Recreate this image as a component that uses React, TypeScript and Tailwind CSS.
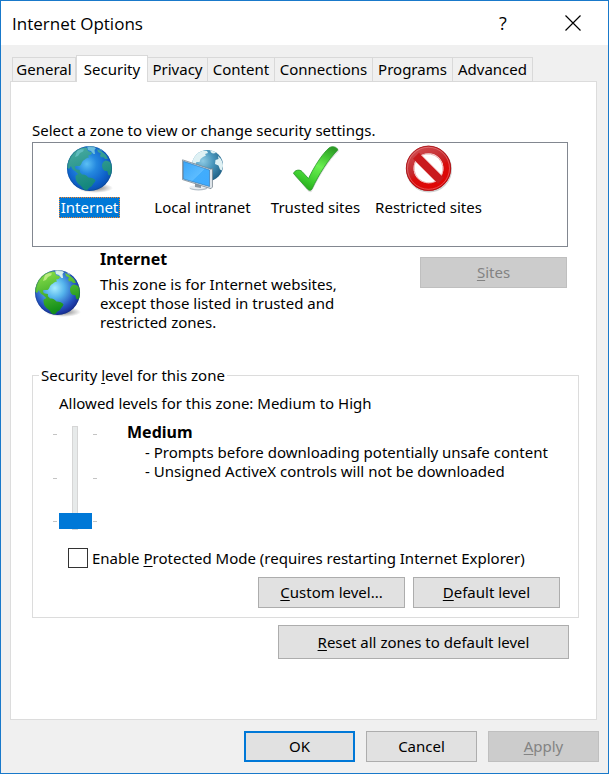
import { useId, useState } from "react";
import type { ReactNode } from "react";

function Globe({ selected = false }: { selected?: boolean }) {
  const id = useId();
  const sea = selected
    ? ["#5cc0f4", "#2488df", "#0f62cb", "#0a4fae"]
    : ["#a6ecff", "#55b4ec", "#2552be", "#17278f"];
  const land = selected ? ["#46a9a0", "#14877c"] : ["#86dd48", "#148f1a"];
  return (
    <svg viewBox="0 0 48 48" className="size-12 shrink-0" aria-hidden="true">
      <defs>
        <radialGradient id={`${id}s`} cx="0.44" cy="0.4" r="0.62">
          <stop offset="0" stopColor={sea[0]} />
          <stop offset="0.35" stopColor={sea[1]} />
          <stop offset="0.75" stopColor={sea[2]} />
          <stop offset="1" stopColor={sea[3]} />
        </radialGradient>
        <linearGradient id={`${id}l`} gradientUnits="userSpaceOnUse" x1="8" y1="4" x2="20" y2="42">
          <stop offset="0" stopColor={land[0]} />
          <stop offset="1" stopColor={land[1]} />
        </linearGradient>
        <radialGradient id={`${id}h`}>
          <stop offset="0" stopColor="#444" stopOpacity="0.75" />
          <stop offset="1" stopColor="#555" stopOpacity="0" />
        </radialGradient>
        <clipPath id={`${id}c`}>
          <circle cx="23.5" cy="23.5" r="22.5" />
        </clipPath>
      </defs>
      <ellipse cx="29" cy="43" rx="18" ry="5" fill={`url(#${id}h)`} />
      <circle cx="23.5" cy="23.5" r="22.5" fill={`url(#${id}s)`} />
      <g clipPath={`url(#${id}c)`} fill={`url(#${id}l)`}>
        <path d="M0 22C1 14 5 8 10 5c4-2 8-3 11-2l1 3 4 1.500c0 2-2 3-4 3l1 2c-2 0-3 1-4 2-2 1-3 2-3.500 4-1 2-1.500 2.500-3 2.500l-3 0c-1 1.500 0 3 1.500 3.500l3 .5c-.5 2 0 3 2 4l-1 1c-3-.5-4-2.500-6-4-2-1-3-2-4-5l-2 3z" />
        <path d="M9.500 31c2-2 4-2.500 6.500-1.500 3-.5 5 1 6.500 3 3 0 6 1 7 3-.5 2-2 2.500-3 4.500-1 2-3 2-4 3.500-1 2-3 2.500-4 1.500-2-1.500-2-3-4-4.500-3-2-5-4-5-9.500z" />
        <path d="M36 20c.5-2 1.500-4 3.500-4.500 2 .5 4 .5 6 3l1 5-1 6c-1 1-2 1-3 .500-1-1.500-.5-3-1.500-4-3 .5-5-2-5-6z" />
        <path d="m31 4 4 2 5 4 2 4-3 0c-1-2-2-2-4-1.500l-1-2 1-2-3-1.500z" />
        <path fill={selected ? "#6fbfdc" : "#d9f2ec"} d="m21 1 6 0 3 2-1.500 2 .5 4-1.500 0-2.500-3-3-1zm11 1.500 3 1 2 2.500-3-1z" />
        <path fill={selected ? "#6cc4cc" : "#d6f39a"} opacity="0.7" d="M11 6c2-2 5-2 7-1.500l-1 2-3 1.500-2 3-3 1z" />
      </g>
      <circle cx="23.5" cy="23.5" r="22" fill="none" stroke="#0a3a72" strokeOpacity="0.3" />
    </svg>
  );
}

function Intranet() {
  return (
    <svg viewBox="0 0 48 48" className="size-12" aria-hidden="true">
      <defs>
        <radialGradient id="net-sea" cx="0.35" cy="0.35" r="0.75">
          <stop offset="0" stopColor="#8fcbe4" />
          <stop offset="0.45" stopColor="#4a97bd" />
          <stop offset="1" stopColor="#1c5b80" />
        </radialGradient>
        <linearGradient id="net-screen" x1="0" y1="0" x2="1" y2="1">
          <stop offset="0" stopColor="#3aa6f8" />
          <stop offset="0.55" stopColor="#5cbcff" />
          <stop offset="0.56" stopColor="#41adfc" />
          <stop offset="1" stopColor="#3eaaff" />
        </linearGradient>
        <clipPath id="net-clip">
          <circle cx="28.500" cy="20.500" r="15.500" />
        </clipPath>
      </defs>
      <circle cx="28.500" cy="20.500" r="15.500" fill="url(#net-sea)" />
      <g clipPath="url(#net-clip)" fill="#dff1f4">
        <path d="M12 17c1-6 6-10 11-11.500l5 .5 1 2-3 1 1 1.500-3 1.500-2.500 2-1 3-3 0-1 2-3-1z" />
        <path d="m31 5 4 .5 2 2.500-3 .5-2-1zM39 11l3 3 2.500 6-1.500 5.500-2-1-1.500-4-3.500-1.500.5-4 3-1z" />
      </g>
      <ellipse cx="19.500" cy="43" rx="9" ry="2.600" fill="#b3bec7" />
      <ellipse cx="19" cy="42.200" rx="8.500" ry="2" fill="#e9eef2" />
      <path d="m16 37 6 2v4l-6-1z" fill="#8b98a3" />
      <path d="m3.500 14.800 28.500 9.400 1.500-.7v18.500l-1.500 1.700L3.500 34.600z" fill="#dfe5ea" stroke="#6f7c87" strokeWidth="0.7" />
      <path d="m4.500 16.300 26 8.700v16.500l-26-7.500z" fill="url(#net-screen)" stroke="#2670ad" strokeWidth="0.6" />
    </svg>
  );
}

function Trusted() {
  return (
    <svg viewBox="0 0 48 48" className="size-12" aria-hidden="true">
      <defs>
        <linearGradient id="ok-fill" x1="0.3" y1="1" x2="0.8" y2="0">
          <stop offset="0" stopColor="#25a818" />
          <stop offset="0.2" stopColor="#3ccb2e" />
          <stop offset="0.55" stopColor="#6bf052" />
          <stop offset="0.8" stopColor="#43c433" />
          <stop offset="1" stopColor="#2f9b27" />
        </linearGradient>
      </defs>
      <path d="M3 31c0-3 5-4 8-1l6 6C22 24 31 10 38 4c3-3 9-1 9 2C37 15 28 30 20 46c-1 2-3 1-4 0z" fill="#777" opacity="0.25" />
      <path
        d="M1.500 28.500c1-3.500 6-4.500 8.500-2l6.500 7C22 22 30 9 37 3c3-2.500 8.500-1 8.700 2C36 15 27 29 20 44c-1 1.800-3 1.600-4.300.3z"
        fill="url(#ok-fill)"
        stroke="#28962a"
        strokeWidth="0.8"
      />
    </svg>
  );
}

function Restricted() {
  return (
    <svg viewBox="0 0 48 48" className="size-12" aria-hidden="true">
      <defs>
        <linearGradient id="no-fill" x1="0.2" y1="0" x2="0.7" y2="1">
          <stop offset="0" stopColor="#d0484c" />
          <stop offset="0.45" stopColor="#c5282c" />
          <stop offset="0.6" stopColor="#d80c0c" />
          <stop offset="1" stopColor="#e00505" />
        </linearGradient>
      </defs>
      <circle cx="24" cy="24.500" r="19.500" fill="none" stroke="#777" strokeOpacity="0.35" strokeWidth="7" />
      <circle cx="23.500" cy="23.300" r="18.700" fill="none" stroke="url(#no-fill)" strokeWidth="7.500" />
      <path d="m11 10.800 25 25" stroke="#c9191d" strokeWidth="8.500" />
      <circle cx="23.500" cy="23.300" r="22.200" fill="none" stroke="#a30d12" strokeWidth="0.8" />
      <circle cx="23.500" cy="23.300" r="21" fill="none" stroke="#ee9a9a" strokeOpacity="0.6" strokeWidth="0.8" />
      <path
        d="M16.500 10.300a15 15 0 0 1 20 20zM30.500 36.500a15 15 0 0 1-20-20z"
        fill="none"
        stroke="#eda3a3"
        strokeWidth="0.9"
      />
    </svg>
  );
}

const tabs = [
  { name: "General", width: "w-16" },
  { name: "Security", width: "w-[72px]" },
  { name: "Privacy", width: "w-[60px]" },
  { name: "Content", width: "w-[67px]" },
  { name: "Connections", width: "w-[98px]" },
  { name: "Programs", width: "w-20" },
  { name: "Advanced", width: "w-20" },
];

const zones = [
  { name: "Internet", icon: <Globe selected /> },
  { name: "Local intranet", icon: <Intranet /> },
  { name: "Trusted sites", icon: <Trusted /> },
  { name: "Restricted sites", icon: <Restricted /> },
];

function Button({
  children,
  className,
  disabled = false,
}: {
  children: ReactNode;
  className: string;
  disabled?: boolean;
}) {
  const look = disabled
    ? "border border-[#bfbfbf] bg-[#cccccc] text-[#838383]"
    : "border border-[#adadad] bg-[#e1e1e1]";
  return (
    <button type="button" disabled={disabled} className={`${look} ${className}`}>
      {children}
    </button>
  );
}

function Key({ children }: { children: string }) {
  return <span className="underline decoration-1 underline-offset-2">{children}</span>;
}

function Ticks() {
  return (
    <div className="flex h-[88px] w-1 flex-col justify-between" aria-hidden="true">
      <span className="h-px bg-[#c4c4c4]" />
      <span className="h-px bg-[#c4c4c4]" />
      <span className="h-px bg-[#c4c4c4]" />
    </div>
  );
}

export default function App() {
  const [tab, setTab] = useState("Security");
  return (
    <div className="flex min-h-screen flex-col border border-[#1979ca] bg-[#f0f0f0] font-['Noto_Sans',sans-serif] text-[15px] leading-[19px] text-black">
      <header className="flex h-11 items-center justify-between bg-white pr-[26px] pl-[11px]">
        <h1 className="font-['Open_Sans',sans-serif] text-[17px]">Internet Options</h1>
        <div className="flex items-center gap-[51px]">
          <button type="button" aria-label="Help" className="w-5 font-['Open_Sans',sans-serif] text-[18px]">
            ?
          </button>
          <button type="button" aria-label="Close" className="p-px">
            <svg viewBox="0 0 16 16" className="size-4" stroke="#000" strokeWidth="1.200">
              <path d="m.5.5 15 15M15.500.5l-15 15" />
            </svg>
          </button>
        </div>
      </header>

      <main className="flex grow flex-col pt-[10px] pr-[11px] pl-[9px]">
        <div role="tablist" className="relative z-10 -mb-px flex h-[27px] items-end pl-[2px]">
          {tabs.map((t) => (
            <button
              key={t.name}
              type="button"
              role="tab"
              aria-selected={t.name === tab}
              onClick={() => setTab(t.name)}
              className={`${t.width} ${
                t.name === tab
                  ? "h-[27px] border-x border-t border-[#d9d9d9] bg-white"
                  : "h-[25px] border-t border-r border-b border-[#d9d9d9] first:border-l"
              }`}
            >
              {t.name}
            </button>
          ))}
        </div>

        <section role="tabpanel" className="grow border border-[#dcdcdc] bg-white pt-[39px] pr-[17px] pl-[21px]">
          <p>Select a zone to view or change security settings.</p>
          <ul className="mt-[2px] mr-[11px] flex h-[105px] border border-[#828790] pt-[2px]">
            {zones.map((z, i) => (
              <li key={z.name} className="w-[113px]">
                <button type="button" className="flex w-full flex-col items-center gap-1">
                  {z.icon}
                  <span
                    className={
                      i === 0
                        ? "border border-dotted border-[#ff8728] bg-[#0078d7] px-px text-white"
                        : "border border-transparent whitespace-nowrap"
                    }
                  >
                    {z.name}
                  </span>
                </button>
              </li>
            ))}
          </ul>

          <div className="mt-[2px] mr-3 flex">
            <div className="mt-[20px] ml-[2px]">
              <Globe />
            </div>
            <div className="ml-[18px] grow">
              <h2 className="text-base leading-5 font-bold">Internet</h2>
              <p className="mt-[6px]">
                This zone is for Internet websites,
                <br />
                except those listed in trusted and
                <br />
                restricted zones.
              </p>
            </div>
            <Button disabled className="mt-2 h-[31px] w-[147px]">
              <Key>S</Key>ites
            </Button>
          </div>

          <fieldset className="mt-[34px] border border-[#dcdcdc] pb-[9px]">
            <legend className="ml-[6px] px-[2px]">
              Security <Key>l</Key>evel for this zone
            </legend>
            <p className="mt-[9px] ml-[26px]">Allowed levels for this zone: Medium to High</p>
            <div className="mt-[13px] ml-5 flex">
              <div className="flex items-start">
                <div className="mt-2">
                  <Ticks />
                </div>
                <input
                  type="range"
                  aria-label="Security level"
                  min={0}
                  max={2}
                  defaultValue={0}
                  className="mr-[2px] ml-px h-[104px] w-[33px] appearance-none bg-transparent [direction:rtl] [writing-mode:vertical-lr] [&::-webkit-slider-runnable-track]:h-full [&::-webkit-slider-runnable-track]:w-[6px] [&::-webkit-slider-runnable-track]:border [&::-webkit-slider-runnable-track]:border-[#d6d6d6] [&::-webkit-slider-runnable-track]:bg-[#e7eaea] [&::-webkit-slider-thumb]:-ml-[14px] [&::-webkit-slider-thumb]:h-4 [&::-webkit-slider-thumb]:w-[33px] [&::-webkit-slider-thumb]:appearance-none [&::-webkit-slider-thumb]:bg-[#0078d7]"
                />
                <div className="mt-2">
                  <Ticks />
                </div>
              </div>
              <div className="-mt-1 ml-[30px]">
                <h2 className="text-base leading-5 font-bold">Medium</h2>
                <ul className="mt-px pl-[18px]">
                  <li>- Prompts before downloading potentially unsafe content</li>
                  <li>- Unsigned ActiveX controls will not be downloaded</li>
                </ul>
              </div>
            </div>
            <label className="mt-[18px] ml-[35px] flex w-fit items-center gap-1">
              <input type="checkbox" className="size-5 appearance-none border border-[#333333] bg-white checked:bg-[#0078d7]" />
              <span>
                Enable <Key>P</Key>rotected Mode (requires restarting Internet Explorer)
              </span>
            </label>
            <div className="mt-[9px] mr-[18px] flex justify-end gap-2">
              <Button className="h-[31px] w-[147px]">
                <Key>C</Key>ustom level...
              </Button>
              <Button className="h-[31px] w-[147px]">
                <Key>D</Key>efault level
              </Button>
            </div>
          </fieldset>

          <div className="mt-[7px] mr-[10px] flex justify-end">
            <Button className="h-[34px] w-[291px]">
              <Key>R</Key>eset all zones to default level
            </Button>
          </div>
        </section>
      </main>

      <footer className="flex justify-end gap-[11px] pt-[11px] pr-[9px] pb-[11px]">
        <button type="button" className="h-[31px] w-[111px] border-2 border-[#0078d7] bg-[#e1e1e1]">
          OK
        </button>
        <Button className="h-[31px] w-[111px]">Cancel</Button>
        <Button disabled className="h-[31px] w-[111px]">
          <Key>A</Key>pply
        </Button>
      </footer>
    </div>
  );
}
